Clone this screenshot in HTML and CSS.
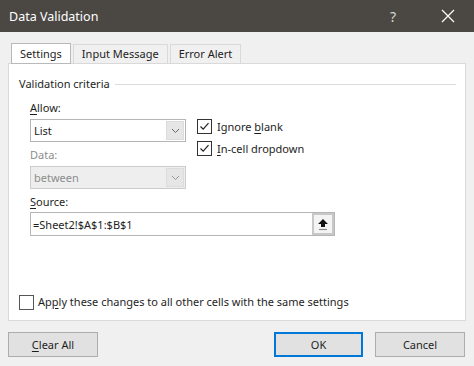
FILE: index.html
```html
<!DOCTYPE html>
<html lang="en">
<head>
  <meta charset="UTF-8" />
  <title>Data Validation</title>
  <link rel="stylesheet" href="styles.css">
</head>
<body>
  <div class="titlebar">
    <span class="title">Data Validation</span>
    <span class="help">?</span>
    <span class="close">
      <svg width="14" height="14" viewBox="0 0 14 14"><path d="M1 1L13 13M13 1L1 13" stroke="#fff" stroke-width="1.2" fill="none"/></svg>
    </span>
  </div>

  <div class="tabs">
    <div class="tab active">Settings</div>
    <div class="tab">Input Message</div>
    <div class="tab">Error Alert</div>
  </div>

  <div class="panel">
    <div class="legend"><span>Validation criteria</span></div>

    <div class="criteria">
      <div class="label"><u>A</u>llow:</div>
      <div class="allow-row">
        <div class="select">
          <span class="value">List</span>
          <span class="arrow">
            <svg width="9" height="6" viewBox="0 0 9 6"><path d="M1 1L4.5 4.5L8 1" stroke="#666" stroke-width="1" fill="none"/></svg>
          </span>
        </div>
        <div class="checks">
          <div class="check">
            <span class="box">
              <svg width="13" height="13" viewBox="0 0 13 13"><path d="M2.5 6.5L5.2 9.2L10.5 3.2" stroke="#222" stroke-width="1.2" fill="none"/></svg>
            </span>
            <span>Ignore <u>b</u>lank</span>
          </div>
          <div class="check">
            <span class="box">
              <svg width="13" height="13" viewBox="0 0 13 13"><path d="M2.5 6.5L5.2 9.2L10.5 3.2" stroke="#222" stroke-width="1.2" fill="none"/></svg>
            </span>
            <span><u>I</u>n-cell dropdown</span>
          </div>
        </div>
      </div>

      <div class="label disabled">Data:</div>
      <div class="select disabled">
        <span class="value">between</span>
        <span class="arrow">
          <svg width="9" height="6" viewBox="0 0 9 6"><path d="M1 1L4.5 4.5L8 1" stroke="#999" stroke-width="1" fill="none"/></svg>
        </span>
      </div>

      <div class="label source-label"><u>S</u>ource:</div>
      <div class="source">
        <span class="value">=Sheet2!$A$1:$B$1</span>
        <span class="pick">
          <svg width="12" height="13" viewBox="0 0 12 13"><path d="M6 1L11 6H8V9H4V6H1Z" fill="#111"/><path d="M2 11.5H10" stroke="#888" stroke-width="1.2"/></svg>
        </span>
      </div>
    </div>

    <div class="apply">
      <span class="box"></span>
      <span>Ap<u>p</u>ly these changes to all other cells with the same settings</span>
    </div>
  </div>

  <div class="footer">
    <button class="btn"><u>C</u>lear All</button>
    <div class="spacer"></div>
    <button class="btn default">OK</button>
    <button class="btn">Cancel</button>
  </div>
</body>
</html>
```

FILE: styles.css
```css
body {
  margin: 0;
  background-color: #f0f0f0;
  font-family: "Noto Sans", "Open Sans", sans-serif;
  font-size: 11px;
  color: #1e1e1e;
  width: 474px;
  height: 366px;
  overflow: hidden;
}

u {
  text-decoration: underline;
  text-underline-offset: 2px;
}

.titlebar {
  height: 32px;
  background-color: #4b4844;
  color: #ffffff;
  display: flex;
  align-items: center;
  padding-left: 9px;
}

.title {
  font-size: 12.5px;
  flex: 1;
}

.help {
  font-size: 14px;
  color: #d8d8d8;
  width: 20px;
  margin-right: 31px;
}

.close {
  width: 14px;
  height: 14px;
  margin-right: 19px;
  display: flex;
}

.tabs {
  display: flex;
  padding: 11px 0 0 11px;
  gap: 2px;
  position: relative;
  z-index: 1;
}

.tab {
  padding: 0 8px;
  border: 1px solid #d9d9d9;
  border-bottom: none;
  background-color: #f0f0f0;
  margin-top: 1px;
  height: 18px;
  line-height: 18px;
}

.tab.active {
  background-color: #ffffff;
  border-color: #b9b9b9;
  border-bottom: 1px solid #b9b9b9;
  margin-top: 0;
  height: 19px;
  line-height: 20px;
  padding: 0 8px;
}

.panel {
  margin: -1px 8px 0 8px;
  height: 256px;
  background-color: #ffffff;
  border: 1px solid #d9d9d9;
  display: flex;
  flex-direction: column;
}

.legend {
  display: flex;
  align-items: center;
  padding: 12px 9px 0 10px;
  line-height: 16px;
}

.legend::after {
  content: "";
  flex: 1;
  border-top: 1px solid #dcdcdc;
  margin-left: 5px;
  margin-top: 1px;
}

.criteria {
  padding-left: 21px;
}

.label {
  line-height: 16px;
  margin-top: 8px;
  margin-bottom: 3px;
}

.label.disabled {
  color: #8c8c8c;
  margin-top: 5px;
}

.label.source-label {
  margin-top: 5px;
  margin-bottom: 2px;
}

.allow-row {
  display: flex;
  height: 23px;
}

.select {
  width: 154px;
  height: 21px;
  border: 1px solid #b5b5b5;
  display: flex;
  align-items: center;
  background-color: #ffffff;
}

.select .value {
  flex: 1;
  padding-left: 3px;
}

.select .arrow {
  width: 18px;
  height: 19px;
  margin-right: 1px;
  background-color: #e6e6e6;
  border: 1px solid #dcdcdc;
  box-sizing: border-box;
  display: flex;
  align-items: center;
  justify-content: center;
}

.select.disabled {
  background-color: #eeeeee;
  border-color: #cccccc;
  color: #8c8c8c;
}

.checks {
  margin-left: 11px;
  display: flex;
  flex-direction: column;
  gap: 7px;
}

.check {
  display: flex;
  align-items: center;
  line-height: 15px;
}

.box {
  width: 13px;
  height: 13px;
  border: 1px solid #333333;
  background-color: #ffffff;
  margin-right: 5px;
  display: flex;
  flex-shrink: 0;
}

.source {
  width: 303px;
  height: 22px;
  border: 1px solid #b5b5b5;
  display: flex;
  align-items: center;
}

.source .value {
  flex: 1;
  padding-left: 2px;
}

.source .pick {
  width: 22px;
  height: 22px;
  box-sizing: border-box;
  border: 2px solid #c8c8c8;
  background-color: #f4f4f4;
  display: flex;
  align-items: center;
  justify-content: center;
}

.apply {
  display: flex;
  align-items: center;
  margin-top: 58px;
  padding-left: 10px;
  line-height: 16px;
}

.apply .box {
  border-color: #555555;
  margin-right: 4px;
}

.footer {
  display: flex;
  padding: 11px 9px 0 8px;
  gap: 12px;
}

.spacer {
  flex: 1;
}

.btn {
  width: 90px;
  height: 25px;
  background-color: #e1e1e1;
  border: 1px solid #adadad;
  font-family: "Noto Sans", "Open Sans", sans-serif;
  font-size: 11px;
  color: #1e1e1e;
  padding: 0;
}

.btn.default {
  border: 2px solid #0078d7;
  width: 89px;
}
```
